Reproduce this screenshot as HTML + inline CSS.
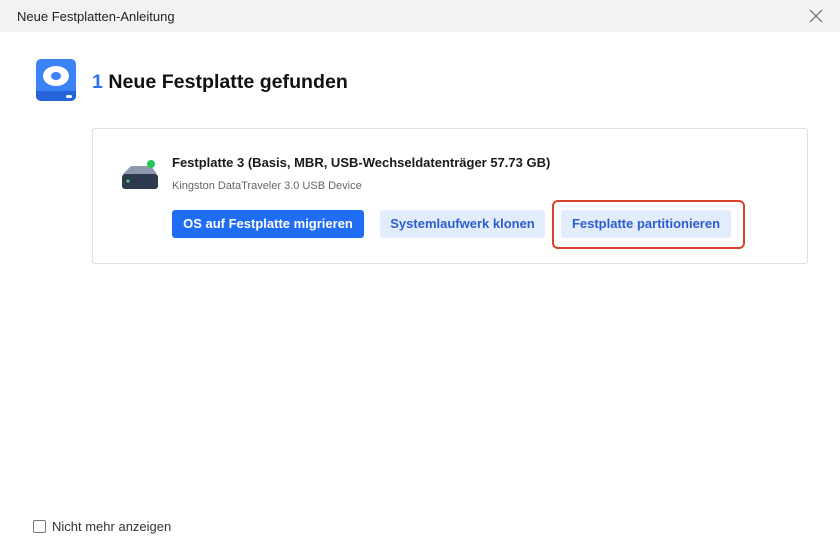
<!DOCTYPE html>
<html><head><meta charset="utf-8"><style>
*{margin:0;padding:0;box-sizing:border-box}
body{width:840px;height:560px;background:#fff;font-family:"Liberation Sans","DejaVu Sans",sans-serif;position:relative;overflow:hidden;color:#1a1a1a}
.title{position:absolute;left:0;top:0;width:840px;height:32px;background:#f1f2f4;font-size:13px;color:#222;padding:9px 0 0 17px}
.close{position:absolute;right:17px;top:9px;width:14px;height:14px}
.h{position:absolute;left:92px;top:71px;font-size:19.6px;font-weight:bold;color:#111}
.h span{color:#2f6ef0}
.card{position:absolute;left:92px;top:128px;width:716px;height:136px;border:1px solid #dcdfe4;border-radius:3px}
.t1{position:absolute;left:172px;top:155px;font-size:13px;font-weight:bold}
.t2{position:absolute;left:172px;top:180px;font-size:11px;color:#666}
.b{position:absolute;top:210px;height:28px;border-radius:3px;font-size:13px;font-weight:600;line-height:28px;text-align:center}
.b1{left:172px;width:192px;background:#1f6cf5;color:#fff}
.b2{left:380px;width:165px;background:#e3ecfb;color:#2b5fd0}
.b3{left:561px;width:170px;background:#e3ecfb;color:#2b5fd0}
.red{position:absolute;left:552px;top:200px;width:193px;height:49px;border:2px solid #d9412c;border-radius:6px}
.cb{position:absolute;left:33px;top:520px;width:13px;height:13px;border:1px solid #777;border-radius:2px}
.cbt{position:absolute;left:52px;top:519px;font-size:13px;color:#333}
</style></head><body>
<div class="title">Neue Festplatten-Anleitung</div>
<svg class="close" viewBox="0 0 14 14"><path d="M1 1L13 13M13 1L1 13" stroke="#666" stroke-width="1.2"/></svg>
<svg style="position:absolute;left:35px;top:58px" width="42" height="44" viewBox="0 0 42 44">
<rect x="1" y="1" width="40" height="42" rx="5" fill="#3b82f6"/>
<path d="M1 33h40v5a5 5 0 0 1-5 5H6a5 5 0 0 1-5-5z" fill="#2563d9"/>
<ellipse cx="21" cy="18" rx="13" ry="10" fill="#fff"/>
<ellipse cx="21" cy="18" rx="5" ry="4" fill="#3b82f6"/>
<rect x="31" y="37" width="6" height="3" rx="1.5" fill="#fff"/>
</svg>
<div class="h"><span>1</span> Neue Festplatte gefunden</div>
<div class="card"></div>
<svg style="position:absolute;left:121px;top:158px" width="38" height="32" viewBox="0 0 38 32">
<path d="M2 16L10 8H30L36 16z" fill="#8d99ad"/>
<rect x="1" y="16" width="36" height="15" rx="3" fill="#2e3a4d"/>
<circle cx="7" cy="23" r="1.5" fill="#4ade80"/>
<circle cx="30" cy="6" r="4" fill="#22c55e"/>
</svg>
<div class="t1">Festplatte 3 (Basis, MBR, USB-Wechseldatenträger 57.73 GB)</div>
<div class="t2">Kingston DataTraveler 3.0 USB Device</div>
<div class="b b1">OS auf Festplatte migrieren</div>
<div class="b b2">Systemlaufwerk klonen</div>
<div class="b b3">Festplatte partitionieren</div>
<div class="red"></div>
<div class="cb"></div>
<div class="cbt">Nicht mehr anzeigen</div>
</body></html>
